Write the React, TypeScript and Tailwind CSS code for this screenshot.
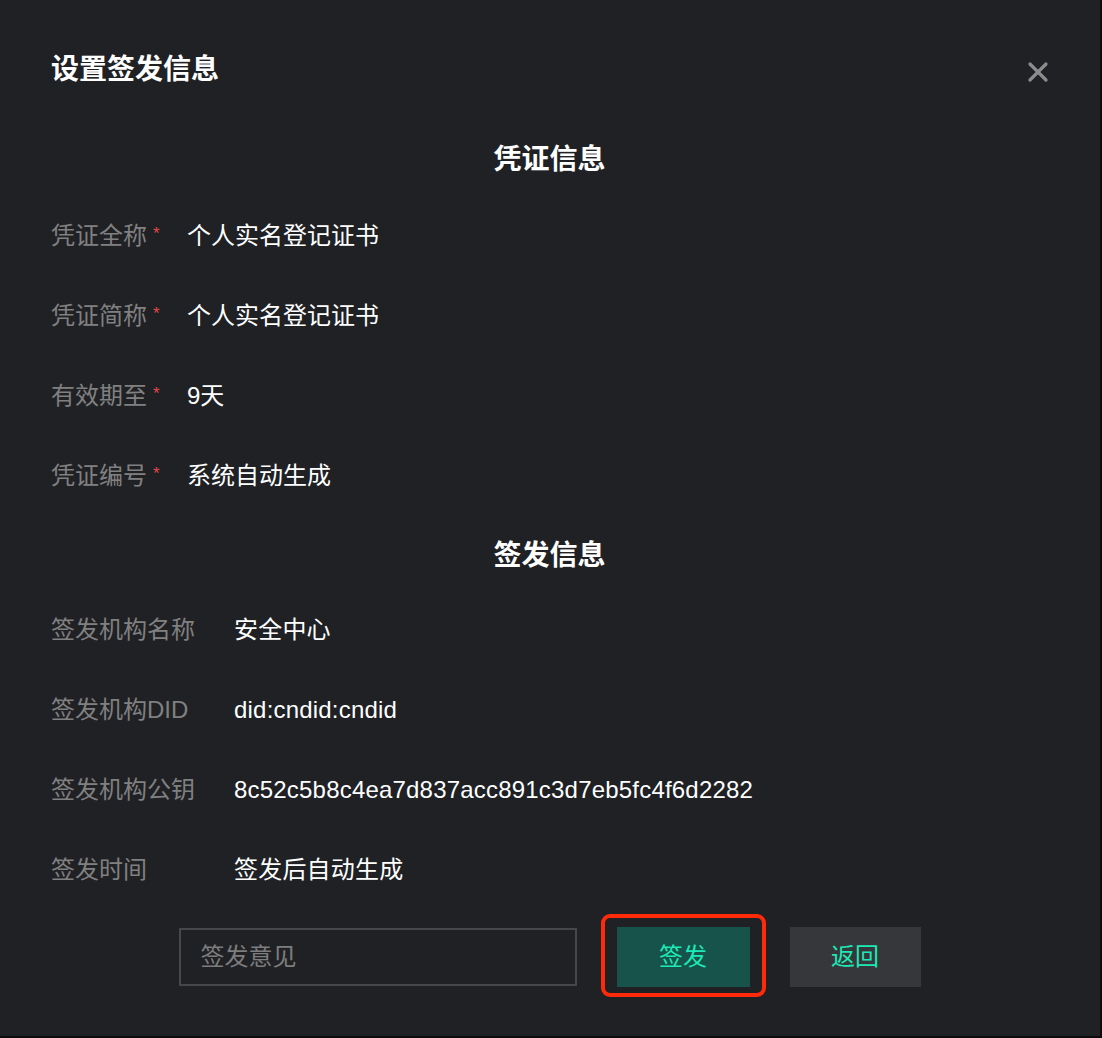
import { X } from "lucide-react";

const credentialRows = [
  { label: "凭证全称", value: "个人实名登记证书" },
  { label: "凭证简称", value: "个人实名登记证书" },
  { label: "有效期至", value: "9天" },
  { label: "凭证编号", value: "系统自动生成" },
];

const issuerRows = [
  { label: "签发机构名称", value: "安全中心" },
  { label: "签发机构DID", value: "did:cndid:cndid" },
  { label: "签发机构公钥", value: "8c52c5b8c4ea7d837acc891c3d7eb5fc4f6d2282" },
  { label: "签发时间", value: "签发后自动生成" },
];

function SectionTitle({ children }: { children: string }) {
  return (
    <div className="flex h-[72px] items-center justify-center text-[28px] font-bold leading-9 text-white">
      {children}
    </div>
  );
}

export default function App() {
  return (
    <div
      className="h-[1038px] w-[1102px] bg-[#0c0c0e]"
      style={{ fontFamily: '"Liberation Sans", "Noto Sans CJK SC", sans-serif' }}
    >
      <div className="flex h-[1036px] w-[1100px] flex-col bg-[#202125] pl-[51px] pr-[52px] pt-[50px]">
        {/* Header */}
        <div className="flex h-10 items-center justify-between">
          <h1 className="text-[28px] font-bold leading-9 text-white">设置签发信息</h1>
          <X className="-mr-[6px] mt-1 h-8 w-8 text-[#8c8c8c]" strokeWidth={2.4} />
        </div>

        <div className="mt-[34px]">
          <SectionTitle>凭证信息</SectionTitle>
        </div>

        {/* Credential info */}
        <div className="flex flex-col">
          {credentialRows.map((row) => (
            <div key={row.label} className="flex h-20 items-center text-2xl leading-8">
              <div className="flex w-[136px] items-center">
                <span className="text-[#808080]">{row.label}</span>
                <span className="ml-[6px] -mt-[4px] text-[17px] leading-4 text-[#e04848]">*</span>
              </div>
              <span className="text-white">{row.value}</span>
            </div>
          ))}
        </div>

        <div className="mt-[4px]">
          <SectionTitle>签发信息</SectionTitle>
        </div>

        {/* Issuer info */}
        <div className="-mt-[2px] flex flex-col">
          {issuerRows.map((row) => (
            <div key={row.label} className="flex h-20 items-center text-2xl leading-8">
              <span className="w-[183px] text-[#808080]">{row.label}</span>
              <span className="tracking-[0.2px] text-white">{row.value}</span>
            </div>
          ))}
        </div>

        {/* Actions */}
        <div className="mt-1 flex items-start justify-center gap-6">
          <div className="mt-[14px] flex h-[58px] w-[398px] items-center border-2 border-[#46474b] px-5 text-2xl text-[#7d7d7d]">
            签发意见
          </div>
          <div className="rounded-[9px] border-4 border-[#ff2a0a] px-3 pb-[6px] pt-[9px]">
            <button className="flex h-[60px] w-[133px] items-center justify-center bg-[#17534b] text-2xl text-[#1de9b6]">
              签发
            </button>
          </div>
          <button className="mt-[13px] flex h-[60px] w-[131px] items-center justify-center bg-[#36373b] text-2xl text-[#1de9b6]">
            返回
          </button>
        </div>
      </div>
    </div>
  );
}
